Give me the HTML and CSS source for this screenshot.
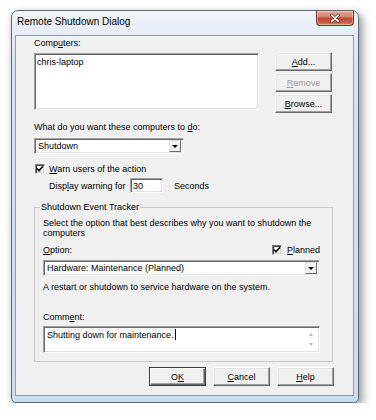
FILE: index.html
```html
<!DOCTYPE html>
<html>
<head>
<meta charset="utf-8">
<title>Remote Shutdown Dialog</title>
<link rel="stylesheet" href="styles.css">
</head>
<body>
<div class="window">
  <div class="titlebar">
    <span class="title">Remote Shutdown Dialog</span>
    <div class="close">
      <svg width="38" height="15" viewBox="0 0 38 15">
        <path d="M15.5 4 L22.5 10.5 M22.5 4 L15.5 10.5" stroke="#6e2b22" stroke-width="3.4" stroke-linecap="round" fill="none"/>
        <path d="M15.5 4 L22.5 10.5 M22.5 4 L15.5 10.5" stroke="#ffffff" stroke-width="1.8" stroke-linecap="round" fill="none"/>
      </svg>
    </div>
  </div>
  <div class="client">
    <div class="label">Comp<u>u</u>ters:</div>
    <div class="computers-row">
      <div class="field computers">chris-laptop</div>
      <div class="side-buttons">
        <div class="btn"><span><u>A</u>dd...</span></div>
        <div class="btn disabled"><span><u>R</u>emove</span></div>
        <div class="btn"><span><u>B</u>rowse...</span></div>
      </div>
    </div>
    <div class="label what">What do you want these computers to <u>d</u>o:</div>
    <div class="field combo shutdown">
      <span class="combo-text">Shutdown</span>
      <span class="drop"><span class="tri"></span></span>
    </div>
    <div class="check-row warn">
      <span class="checkbox"><svg width="8" height="8" viewBox="0 0 8 8"><path d="M1 3.5 L3 5.7 L7 1.3" stroke="#000" stroke-width="1.6" fill="none"/></svg></span>
      <span><u>W</u>arn users of the action</span>
    </div>
    <div class="display-row">
      <span class="display-label">Disp<u>l</u>ay warning for</span>
      <div class="field seconds">30</div>
      <span>Seconds</span>
    </div>
    <fieldset class="group">
      <legend>Shutdown Event Tracker</legend>
      <div class="desc">Select the option that best describes why you want to shutdown the computers</div>
      <div class="option-row">
        <span><u>O</u>ption:</span>
        <span class="check-row planned">
          <span class="checkbox"><svg width="8" height="8" viewBox="0 0 8 8"><path d="M1 3.5 L3 5.7 L7 1.3" stroke="#000" stroke-width="1.6" fill="none"/></svg></span>
          <span><u>P</u>lanned</span>
        </span>
      </div>
      <div class="field combo hardware">
        <span class="combo-text">Hardware: Maintenance (Planned)</span>
        <span class="drop"><span class="tri"></span></span>
      </div>
      <div class="label restart">A restart or shutdown to service hardware on the system.</div>
      <div class="label comment-label">Comm<u>e</u>nt:</div>
      <div class="field comment">
        <span class="comment-text">Shutting down for maintenance.<span class="caret"></span></span>
        <span class="vscroll"><span class="up"></span><span class="down"></span></span>
      </div>
    </fieldset>
    <div class="bottom-buttons">
      <div class="btn default"><span>O<u>K</u></span></div>
      <div class="btn"><span><u>C</u>ancel</span></div>
      <div class="btn"><span><u>H</u>elp</span></div>
    </div>
  </div>
</div>
</body>
</html>
```

FILE: styles.css
```css
* { box-sizing: border-box; }
html, body { margin: 0; padding: 0; background: #ffffff; }
body {
  font-family: "Liberation Sans", Arial, sans-serif;
  font-size: 9px;
  color: #000;
}
u { text-decoration: underline; text-underline-offset: 1px; }

.window {
  width: 348px;
  height: 393px;
  margin: 10px 0 0 11px;
  border: 1px solid #5f6a76;
  border-radius: 7px 7px 5px 5px;
  background: linear-gradient(to bottom, #f1f5fb 0, #e3ecf7 24px, #d3e3f5 60px, #c9ddf3 100%);
  padding: 0 4px 6px 3px;
  box-shadow: 3px 4px 10px rgba(0,0,0,0.45);
  display: flex;
  flex-direction: column;
}

.titlebar {
  height: 24px;
  display: flex;
  align-items: flex-start;
}
.title {
  font-size: 10px;
  line-height: 12px;
  padding: 5px 0 0 2px;
  color: #000;
}
.close {
  margin-left: auto;
  width: 38px;
  height: 15px;
  border: 1px solid #7b3026;
  border-top: none;
  border-radius: 0 0 4px 4px;
  background: linear-gradient(to bottom, #e7a697 0, #d98473 40%, #c24a35 52%, #c75a42 80%, #d98c6e 100%);
  box-shadow: inset 0 0 0 1px rgba(255,255,255,0.35);
  display: flex;
}
.close svg { display: block; }

.client {
  flex: 1;
  background: #f0f0f0;
  border: 1px solid #8a9db3;
  padding: 1px 19px 0 18px;
  display: flex;
  flex-direction: column;
}

.label { line-height: 12px; }

.field {
  background: #fff;
  border: 1px solid;
  border-color: #a0a0a0 #ffffff #ffffff #a0a0a0;
  box-shadow: inset 1px 1px 0 #696969, inset -1px -1px 0 #e3e3e3;
}

.computers-row {
  display: flex;
  align-items: flex-start;
  gap: 16px;
  margin-top: 3px;
}
.computers {
  width: 225px;
  height: 57px;
  margin-top: 1px;
  padding: 2px 2px;
  line-height: 12px;
}
.side-buttons {
  display: flex;
  flex-direction: column;
  gap: 2px;
}

.btn {
  width: 57px;
  height: 19px;
  display: flex;
  align-items: center;
  justify-content: center;
  background: #f0f0f0;
  border: 1px solid;
  border-color: #ffffff #696969 #696969 #ffffff;
  box-shadow: inset -1px -1px 0 #a0a0a0, inset 1px 1px 0 #e3e3e3;
  line-height: 12px;
}
.btn.disabled { color: #a0a0a0; }
.btn.default {
  border: 1px solid #3c3c3c;
  box-shadow: inset 1px 1px 0 #ffffff, inset -1px -1px 0 #696969, inset -2px -2px 0 #a0a0a0;
}

.what { margin-top: 8px; }

.combo {
  display: flex;
  align-items: center;
  height: 16px;
  padding: 2px 2px 2px 2px;
}
.combo-text { flex: 1; padding-left: 1px; line-height: 12px; }
.drop {
  width: 12px;
  height: 12px;
  background: #f0f0f0;
  border: 1px solid;
  border-color: #e3e3e3 #696969 #696969 #e3e3e3;
  display: flex;
  align-items: center;
  justify-content: center;
}
.tri {
  width: 0;
  height: 0;
  border-left: 3px solid transparent;
  border-right: 3px solid transparent;
  border-top: 3px solid #000;
}
.shutdown { width: 150px; margin-top: 5px; }

.check-row {
  display: flex;
  align-items: center;
  gap: 4px;
  line-height: 12px;
}
.checkbox {
  width: 10px;
  height: 10px;
  background: #fff;
  border: 1px solid;
  border-color: #808080 #ffffff #ffffff #808080;
  box-shadow: inset 1px 1px 0 #404040, inset -1px -1px 0 #d4d0c8;
  display: flex;
  align-items: center;
  justify-content: center;
}
.checkbox svg { display: block; }
.warn { margin-top: 9px; margin-left: 1px; }

.display-row {
  display: flex;
  align-items: center;
  margin-top: 3px;
  height: 15px;
  padding-left: 15px;
}
.display-label { width: 81px; }
.seconds {
  width: 33px;
  height: 15px;
  padding: 1px 2px;
  line-height: 12px;
  margin-right: 11px;
}

.group {
  width: 299px;
  margin: 8px 0 0 0;
  border: 1px solid #c9c9c9;
  padding: 0 12px 8px 8px;
  min-width: 0;
}
.group legend {
  padding: 0 1px;
  margin-left: -3px;
  line-height: 12px;
}
.desc { line-height: 10px; margin-top: 5px; }
.option-row {
  display: flex;
  justify-content: space-between;
  align-items: center;
  line-height: 12px;
  margin-top: 6px;
}
.planned { gap: 5px; }
.hardware { width: 277px; margin-top: 4px; }
.restart { margin-top: 5px; }
.comment-label { margin-top: 18px; }
.comment {
  width: 277px;
  height: 27px;
  margin-top: 3px;
  display: flex;
  padding: 2px 2px 2px 2px;
}
.comment-text { flex: 1; line-height: 12px; padding-left: 1px; }
.caret {
  display: inline-block;
  width: 1px;
  height: 11px;
  background: #000;
  vertical-align: -2px;
  margin-left: 1px;
}
.vscroll {
  width: 13px;
  display: flex;
  flex-direction: column;
  justify-content: space-between;
  align-items: center;
  padding: 4px 0 4px;
}
.up, .down {
  width: 0;
  height: 0;
  border-left: 2.5px solid transparent;
  border-right: 2.5px solid transparent;
}
.up { border-bottom: 3px solid #b8b8b8; }
.down { border-top: 3px solid #b8b8b8; }

.bottom-buttons {
  display: flex;
  justify-content: flex-end;
  gap: 7px;
  margin-top: 5px;
}
```
